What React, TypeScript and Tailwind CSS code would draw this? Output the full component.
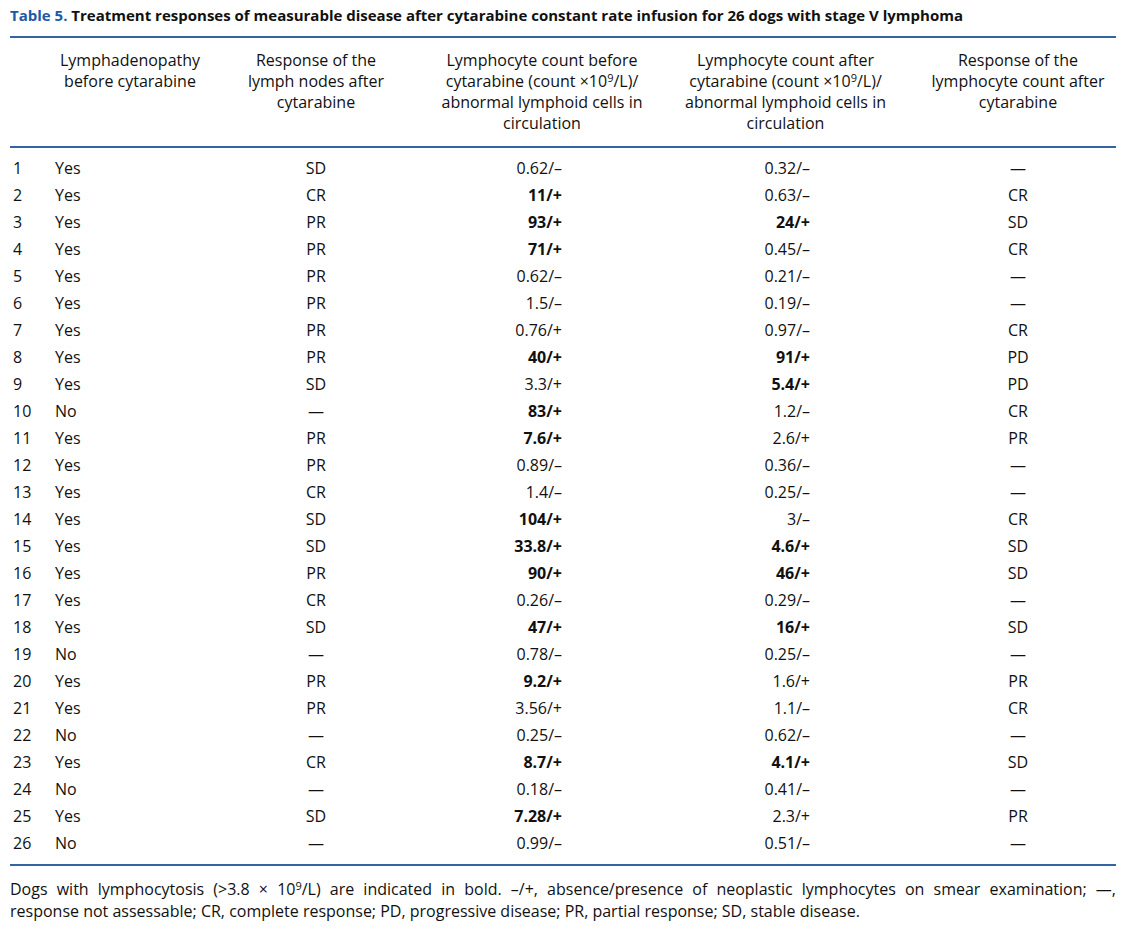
import React from "react";

type Row = [string, string, string, string, boolean, string, boolean, string];

const rows: Row[] = [
  ["1", "Yes", "SD", "0.62/–", false, "0.32/–", false, "—"],
  ["2", "Yes", "CR", "11/+", true, "0.63/–", false, "CR"],
  ["3", "Yes", "PR", "93/+", true, "24/+", true, "SD"],
  ["4", "Yes", "PR", "71/+", true, "0.45/–", false, "CR"],
  ["5", "Yes", "PR", "0.62/–", false, "0.21/–", false, "—"],
  ["6", "Yes", "PR", "1.5/–", false, "0.19/–", false, "—"],
  ["7", "Yes", "PR", "0.76/+", false, "0.97/–", false, "CR"],
  ["8", "Yes", "PR", "40/+", true, "91/+", true, "PD"],
  ["9", "Yes", "SD", "3.3/+", false, "5.4/+", true, "PD"],
  ["10", "No", "—", "83/+", true, "1.2/–", false, "CR"],
  ["11", "Yes", "PR", "7.6/+", true, "2.6/+", false, "PR"],
  ["12", "Yes", "PR", "0.89/–", false, "0.36/–", false, "—"],
  ["13", "Yes", "CR", "1.4/–", false, "0.25/–", false, "—"],
  ["14", "Yes", "SD", "104/+", true, "3/–", false, "CR"],
  ["15", "Yes", "SD", "33.8/+", true, "4.6/+", true, "SD"],
  ["16", "Yes", "PR", "90/+", true, "46/+", true, "SD"],
  ["17", "Yes", "CR", "0.26/–", false, "0.29/–", false, "—"],
  ["18", "Yes", "SD", "47/+", true, "16/+", true, "SD"],
  ["19", "No", "—", "0.78/–", false, "0.25/–", false, "—"],
  ["20", "Yes", "PR", "9.2/+", true, "1.6/+", false, "PR"],
  ["21", "Yes", "PR", "3.56/+", false, "1.1/–", false, "CR"],
  ["22", "No", "—", "0.25/–", false, "0.62/–", false, "—"],
  ["23", "Yes", "CR", "8.7/+", true, "4.1/+", true, "SD"],
  ["24", "No", "—", "0.18/–", false, "0.41/–", false, "—"],
  ["25", "Yes", "SD", "7.28/+", true, "2.3/+", false, "PR"],
  ["26", "No", "—", "0.99/–", false, "0.51/–", false, "—"],
];

const grid = "grid grid-cols-[35px_170px_202px_250px_253px_196px]";

function Nine() {
  return <sup className="text-[11px]">9</sup>;
}

export default function App() {
  return (
    <div
      className="w-[1140px] h-[932px] bg-white text-[#111111] px-[10px] pt-[4px] overflow-hidden"
      style={{ fontFamily: '"Open Sans", "Noto Sans", "Liberation Sans", sans-serif' }}
    >
      <div className="w-[1106px]">
        <div className="text-[15px] leading-[22px] font-bold whitespace-nowrap">
          <span className="text-[#1b5ba6]">Table 5.</span> Treatment responses of measurable disease
          after cytarabine constant rate infusion for 26 dogs with stage V lymphoma
        </div>

        <div className="mt-[10px] border-t-2 border-b-2 border-[#3564a3]">
          <div className={`${grid} text-[16px] leading-[21px] text-center pt-[12px] pb-[12px]`}>
            <div />
            <div>
              Lymphadenopathy
              <br />
              before cytarabine
            </div>
            <div>
              Response of the
              <br />
              lymph nodes after
              <br />
              cytarabine
            </div>
            <div>
              Lymphocyte count before
              <br />
              cytarabine (count ×10<Nine />/L)/
              <br />
              abnormal lymphoid cells in
              <br />
              circulation
            </div>
            <div className="pr-[16px]">
              Lymphocyte count after
              <br />
              cytarabine (count ×10<Nine />/L)/
              <br />
              abnormal lymphoid cells in
              <br />
              circulation
            </div>
            <div>
              Response of the
              <br />
              lymphocyte count after
              <br />
              cytarabine
            </div>
          </div>
        </div>

        <div className="pt-[6px] pb-[8px] border-b-2 border-[#3564a3]">
          {rows.map((r) => (
            <div key={r[0]} className={`${grid} h-[27px] items-center text-[16px]`}>
              <div className="pl-[3px]">{r[0]}</div>
              <div className="pl-[10px]">{r[1]}</div>
              <div className="text-center">{r[2]}</div>
              <div className={`text-right pr-[105px] ${r[4] ? "font-bold" : ""}`}>{r[3]}</div>
              <div className={`text-right pr-[110px] ${r[6] ? "font-bold" : ""}`}>{r[5]}</div>
              <div className="text-center">{r[7]}</div>
            </div>
          ))}
        </div>

        <div className="pt-[12px] text-[16px] leading-[22px]">
          <div className="text-justify [text-align-last:justify] whitespace-nowrap">
            Dogs with lymphocytosis (&gt;3.8 × 10<Nine />/L) are indicated in bold. –/+, absence/presence of
            neoplastic lymphocytes on smear examination; —,
          </div>
          <div>
            response not assessable; CR, complete response; PD, progressive disease; PR, partial response;
            SD, stable disease.
          </div>
        </div>
      </div>
    </div>
  );
}
